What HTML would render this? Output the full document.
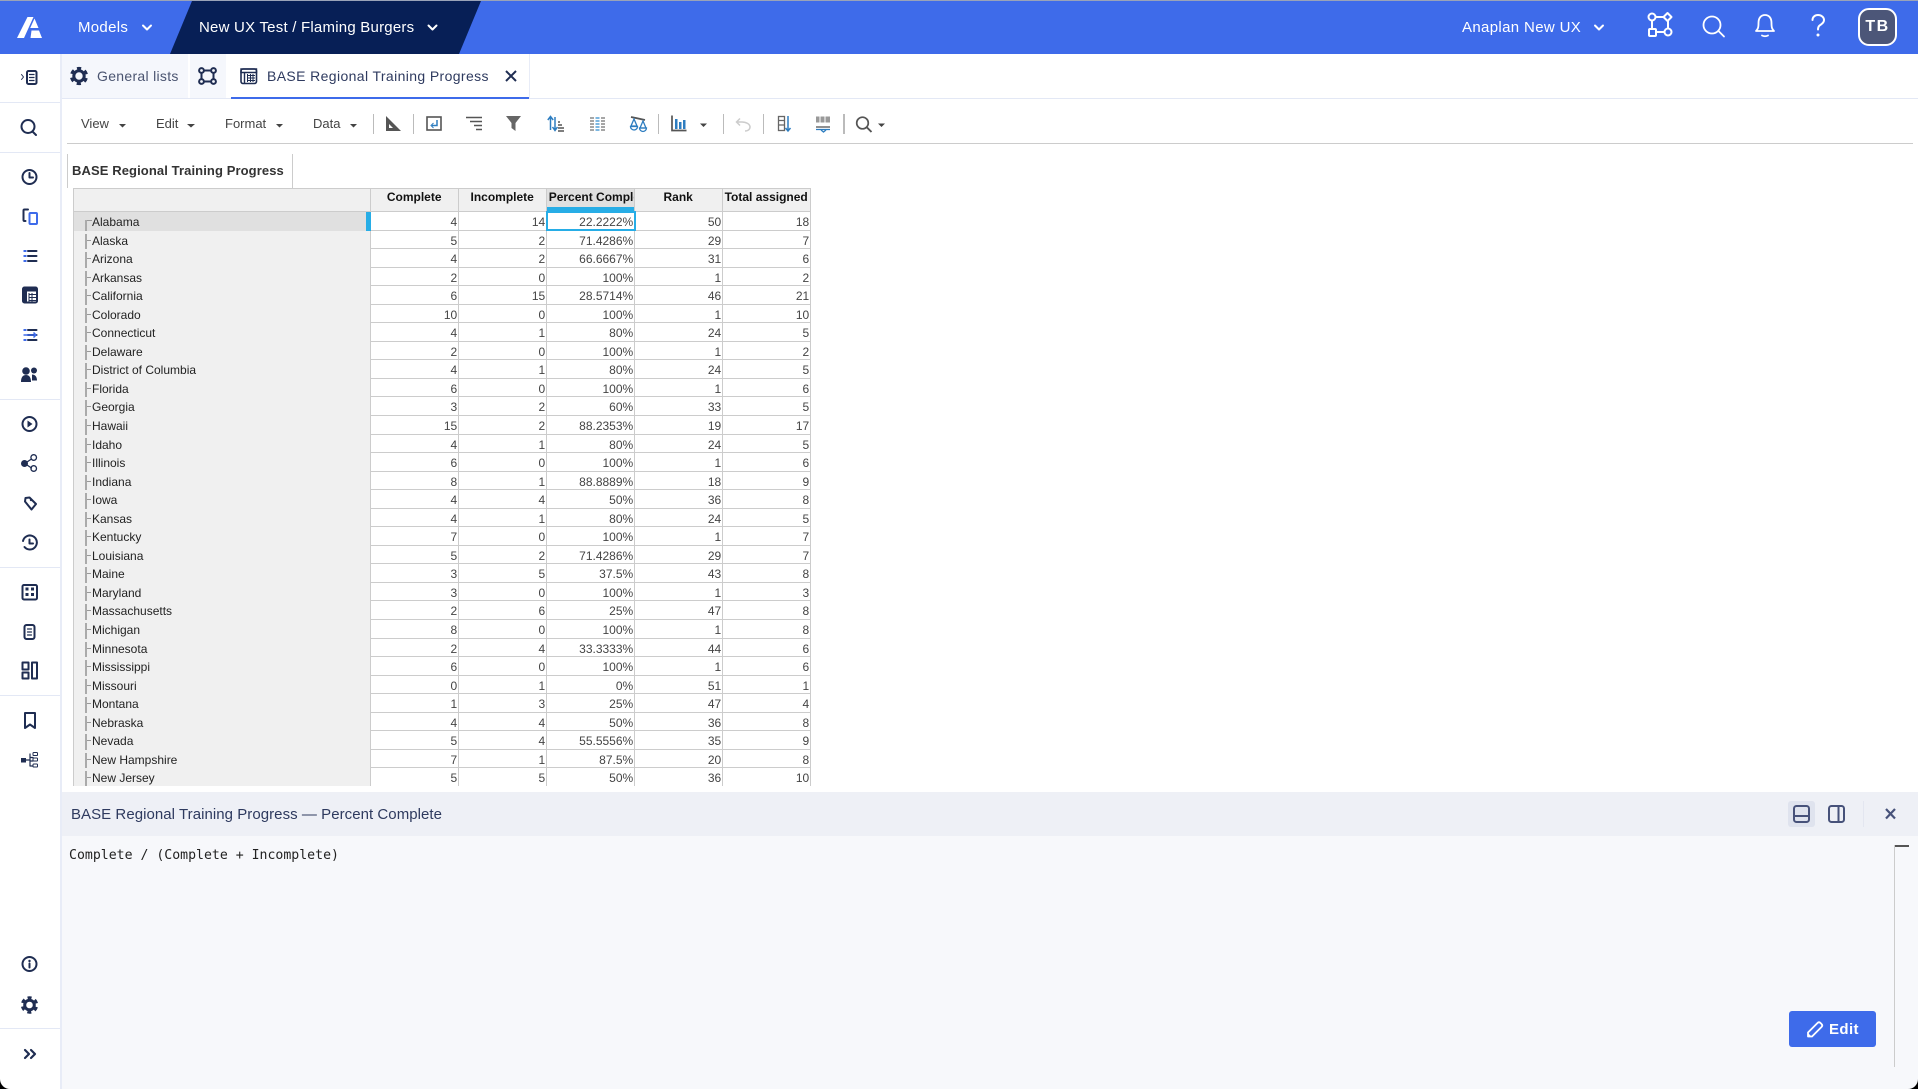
<!DOCTYPE html>
<html><head><meta charset="utf-8"><title>BASE Regional Training Progress</title>
<style>
*{box-sizing:border-box;margin:0;padding:0}
html,body{width:1918px;height:1089px;overflow:hidden;background:#fff;font-family:"Liberation Sans",Arial,sans-serif}
#root{position:relative;width:1918px;height:1089px;overflow:hidden;background:#fff}
.a{position:absolute}
.t{position:absolute;white-space:nowrap;line-height:20px}
.h{font-size:15px;letter-spacing:.3px;color:#fff}
.tb{font-size:13px;color:#444}
.grid{position:absolute;left:73px;top:188px;width:738px;height:598px;overflow:hidden;font-size:12px}
.hd{display:flex;height:24px}
.hd div{width:88px;flex:none;background:#f0f0f0;border-top:1px solid #ccc;border-right:1px solid #ccc;border-bottom:1px solid #ccc;font-weight:bold;color:#111;text-align:center;line-height:17px;white-space:nowrap;overflow:hidden}
.hd div:first-child{width:297.7px;border-left:1px solid #ccc}
.r{display:flex;height:18.55px;line-height:20px}
.r b{display:block;font-weight:normal;width:297.7px;flex:none;background:#f0f0f0;border-left:1px solid #ccc;border-right:1px solid #ccc;padding-left:18px;color:#222;position:relative;white-space:nowrap}
.r b:before{content:"";position:absolute;left:11px;top:3px;bottom:0;width:2px;background:#aaa}
.r b:after{content:"";position:absolute;left:13px;top:9px;width:4px;height:1px;background:#999}
.r i{display:block;font-style:normal;width:88px;flex:none;text-align:right;padding-right:.5px;border-right:1px solid #ccc;border-bottom:1px solid #ccc;color:#444;background:#fff}
.r.s b{background:#e0e0e0}
.r.s b:before{top:8px}
.r.s b:after{top:8px;width:5px}
</style></head><body><div id="root">

<!-- header -->
<div class="a" style="left:0;top:0;width:1918px;height:1px;background:#9aa3b8"></div>
<div class="a" style="left:0;top:1px;width:1918px;height:53px;background:#3e6bea"></div>
<div class="a" style="left:170px;top:1px;width:311px;height:53px;background:#071f56;clip-path:polygon(22px 0,311px 0,289px 100%,0 100%)"></div>
<span class="t h" style="left:78px;top:17px;top:18px">Models</span>
<span class="t h" style="left:199px;top:18px;letter-spacing:.22px">New UX Test / Flaming Burgers</span>
<span class="t h" style="left:1462px;top:18px;letter-spacing:.35px">Anaplan New UX</span>
<div class="a" style="left:1858px;top:8px;width:39px;height:38px;border:2px solid #fff;border-radius:11px;background:#4c5678"></div>
<span class="t" style="left:1858px;top:17px;width:39px;text-align:center;color:#fff;font-weight:bold;font-size:16px;letter-spacing:1.5px">TB</span>

<!-- rail -->
<div class="a" style="left:60px;top:54px;width:2px;height:1035px;background:#e8ecf7"></div>
<div class="a" style="left:0;top:102px;width:60px;height:1px;background:#e3e8f5"></div>
<div class="a" style="left:0;top:152px;width:60px;height:1px;background:#e3e8f5"></div>
<div class="a" style="left:0;top:399px;width:60px;height:1px;background:#e3e8f5"></div>
<div class="a" style="left:0;top:567px;width:60px;height:1px;background:#e3e8f5"></div>
<div class="a" style="left:0;top:695px;width:60px;height:1px;background:#e3e8f5"></div>
<div class="a" style="left:0;top:1028px;width:60px;height:1px;background:#e3e8f5"></div>

<!-- tabs -->
<div class="a" style="left:62px;top:54px;width:126px;height:44px;background:#f5f7fc"></div>
<div class="a" style="left:190px;top:54px;width:36px;height:44px;background:#f5f7fc"></div>
<div class="a" style="left:62px;top:98px;width:1856px;height:1px;background:#e3e8f5"></div>
<div class="a" style="left:231px;top:54px;width:298px;height:45px;background:#fff;border-bottom:2px solid #3e6bea"></div>
<div class="a" style="left:529px;top:54px;width:1px;height:44px;background:#e8ecf7"></div>
<span class="t" style="left:97px;top:66px;font-size:14px;letter-spacing:.3px;color:#4a5470">General lists</span>
<span class="t" style="left:267px;top:66px;font-size:14px;letter-spacing:.38px;color:#2e3a5f">BASE Regional Training Progress</span>

<!-- toolbar -->
<span class="t tb" style="left:81px;top:114px">View</span>
<span class="t tb" style="left:156px;top:114px">Edit</span>
<span class="t tb" style="left:225px;top:114px">Format</span>
<span class="t tb" style="left:313px;top:114px">Data</span>
<div class="a" style="left:67px;top:143px;width:1846px;height:1px;background:#ccc"></div>

<!-- view tab -->
<div class="a" style="left:67px;top:154px;width:226px;height:34px;border-left:1px solid #ccc;border-right:1px solid #ccc"></div>
<span class="t" style="left:72px;top:161px;font-size:13px;font-weight:bold;letter-spacing:.1px;color:#333">BASE Regional Training Progress</span>

<!-- grid -->
<div class="grid">
<div class="hd"><div></div><div>Complete</div><div>Incomplete</div><div style="background:#e0e0e0;text-align:left;padding-left:2px">Percent Complete</div><div>Rank</div><div>Total assigned</div></div>
<div class="r s"><b>Alabama</b><i>4</i><i>14</i><i>22.2222%</i><i>50</i><i>18</i></div>
<div class="r"><b>Alaska</b><i>5</i><i>2</i><i>71.4286%</i><i>29</i><i>7</i></div>
<div class="r"><b>Arizona</b><i>4</i><i>2</i><i>66.6667%</i><i>31</i><i>6</i></div>
<div class="r"><b>Arkansas</b><i>2</i><i>0</i><i>100%</i><i>1</i><i>2</i></div>
<div class="r"><b>California</b><i>6</i><i>15</i><i>28.5714%</i><i>46</i><i>21</i></div>
<div class="r"><b>Colorado</b><i>10</i><i>0</i><i>100%</i><i>1</i><i>10</i></div>
<div class="r"><b>Connecticut</b><i>4</i><i>1</i><i>80%</i><i>24</i><i>5</i></div>
<div class="r"><b>Delaware</b><i>2</i><i>0</i><i>100%</i><i>1</i><i>2</i></div>
<div class="r"><b>District of Columbia</b><i>4</i><i>1</i><i>80%</i><i>24</i><i>5</i></div>
<div class="r"><b>Florida</b><i>6</i><i>0</i><i>100%</i><i>1</i><i>6</i></div>
<div class="r"><b>Georgia</b><i>3</i><i>2</i><i>60%</i><i>33</i><i>5</i></div>
<div class="r"><b>Hawaii</b><i>15</i><i>2</i><i>88.2353%</i><i>19</i><i>17</i></div>
<div class="r"><b>Idaho</b><i>4</i><i>1</i><i>80%</i><i>24</i><i>5</i></div>
<div class="r"><b>Illinois</b><i>6</i><i>0</i><i>100%</i><i>1</i><i>6</i></div>
<div class="r"><b>Indiana</b><i>8</i><i>1</i><i>88.8889%</i><i>18</i><i>9</i></div>
<div class="r"><b>Iowa</b><i>4</i><i>4</i><i>50%</i><i>36</i><i>8</i></div>
<div class="r"><b>Kansas</b><i>4</i><i>1</i><i>80%</i><i>24</i><i>5</i></div>
<div class="r"><b>Kentucky</b><i>7</i><i>0</i><i>100%</i><i>1</i><i>7</i></div>
<div class="r"><b>Louisiana</b><i>5</i><i>2</i><i>71.4286%</i><i>29</i><i>7</i></div>
<div class="r"><b>Maine</b><i>3</i><i>5</i><i>37.5%</i><i>43</i><i>8</i></div>
<div class="r"><b>Maryland</b><i>3</i><i>0</i><i>100%</i><i>1</i><i>3</i></div>
<div class="r"><b>Massachusetts</b><i>2</i><i>6</i><i>25%</i><i>47</i><i>8</i></div>
<div class="r"><b>Michigan</b><i>8</i><i>0</i><i>100%</i><i>1</i><i>8</i></div>
<div class="r"><b>Minnesota</b><i>2</i><i>4</i><i>33.3333%</i><i>44</i><i>6</i></div>
<div class="r"><b>Mississippi</b><i>6</i><i>0</i><i>100%</i><i>1</i><i>6</i></div>
<div class="r"><b>Missouri</b><i>0</i><i>1</i><i>0%</i><i>51</i><i>1</i></div>
<div class="r"><b>Montana</b><i>1</i><i>3</i><i>25%</i><i>47</i><i>4</i></div>
<div class="r"><b>Nebraska</b><i>4</i><i>4</i><i>50%</i><i>36</i><i>8</i></div>
<div class="r"><b>Nevada</b><i>5</i><i>4</i><i>55.5556%</i><i>35</i><i>9</i></div>
<div class="r"><b>New Hampshire</b><i>7</i><i>1</i><i>87.5%</i><i>20</i><i>8</i></div>
<div class="r"><b>New Jersey</b><i>5</i><i>5</i><i>50%</i><i>36</i><i>10</i></div>
</div>
<!-- selection markers -->
<div class="a" style="left:366px;top:212px;width:5px;height:19px;background:#27ade6"></div>
<div class="a" style="left:547px;top:207px;width:87px;height:5px;background:#27ade6"></div>
<div class="a" style="left:546px;top:211px;width:90px;height:20px;border:2px solid #27ade6"></div>

<!-- formula panel -->
<div class="a" style="left:62px;top:792px;width:1856px;height:44px;background:#eef0f6"></div>
<div class="a" style="left:62px;top:836px;width:1856px;height:253px;background:#f7f8fb"></div>
<span class="t" style="left:71px;top:805px;font-size:15px;letter-spacing:.05px;color:#2e3a5f">BASE Regional Training Progress — Percent Complete</span>
<div class="a" style="left:1788px;top:801px;width:27px;height:26px;background:#dfe3ee;border-radius:3px"></div>
<div class="a" style="left:1863px;top:801px;width:1px;height:26px;background:#e3e6f0"></div>
<span class="t" style="left:69px;top:846px;font-family:'DejaVu Sans Mono','Liberation Mono',monospace;font-size:13.2px;color:#222">Complete / (Complete + Incomplete)</span>
<div class="a" style="left:1894px;top:845px;width:1px;height:222px;background:#ccc"></div>
<div class="a" style="left:1895px;top:845px;width:14px;height:2px;background:#555"></div>
<div class="a" style="left:1789px;top:1011px;width:87px;height:36px;background:#3e6bea;border-radius:3px"></div>
<span class="t" style="left:1829px;top:1020px;color:#fff;font-size:15px;letter-spacing:.4px;font-weight:bold">Edit</span>

<!-- bottom corners -->
<div class="a" style="left:0;top:1079px;width:10px;height:10px;background:#000"></div>
<div class="a" style="left:0;top:1079px;width:10px;height:10px;background:#fff;border-bottom-left-radius:10px"></div>
<div class="a" style="left:1908px;top:1079px;width:10px;height:10px;background:#000"></div>
<div class="a" style="left:1908px;top:1079px;width:10px;height:10px;background:#f7f8fb;border-bottom-right-radius:10px"></div>

<!-- icons -->
<svg class="a" style="left:0;top:0" width="1918" height="1089" viewBox="0 0 1918 1089" fill="none">
<!-- logo -->
<path d="M27.500 17h6L24 38h-7zM34.500 18.500l4 9.500h-8.300zM31.500 30.500h7.500l3 7.500H30.500z" fill="#fff"/>
<!-- header chevrons -->
<g stroke="#fff" stroke-width="2" stroke-linecap="round" stroke-linejoin="round">
<path d="M143 25.500l4 4 4-4"/><path d="M428.500 25.500l4 4 4-4"/><path d="M1595 25.500l4 4 4-4"/>
</g>
<!-- header right icons -->
<g stroke="#fff" stroke-width="2" stroke-linejoin="round" stroke-linecap="round">
<circle cx="1652" cy="17" r="3.500"/><path d="M1667.500 13l4 4-4 4-4-4z"/><rect x="1649" y="29" width="7" height="7" rx="1"/><circle cx="1668" cy="32" r="3.500"/>
<path d="M1656 17h7.500M1652 21v8M1668 21v7.500M1656 32h8.500"/>
<circle cx="1712" cy="25" r="8.500" stroke-width="1.800"/><path d="M1718.500 31l5.500 5.500" stroke-width="1.800"/>
<path d="M1756 31c2-2 2.500-3.500 2.500-8 0-5 2.500-8 6.500-8s6.500 3 6.500 8c0 4.500.5 6 2.500 8z" stroke-width="1.800"/><path d="M1762 35.500c2 1 4 1 6 0" stroke-width="1.800"/>
<path d="M1812.500 20c0-3 2.500-5 5.500-5s6 2 6 5-2.500 4-4 5.200c-1.500 1-2 2-2 4.300"/>
</g>
<circle cx="1818" cy="35" r="1.500" fill="#fff"/>

<!-- tab icons -->
<circle cx="79" cy="76" r="5.200" stroke="#1f2d52" stroke-width="3"/>
<circle cx="79" cy="76" r="7.800" stroke="#1f2d52" stroke-width="2.600" stroke-dasharray="4.200 3.970" transform="rotate(-105 79 76)"/>
<g stroke="#1f2d52" stroke-width="2" stroke-linejoin="round">
<circle cx="201.500" cy="70.500" r="2.400"/><circle cx="213.500" cy="70.500" r="2.400"/><circle cx="201.500" cy="81.500" r="2.400"/><circle cx="213.500" cy="81.500" r="2.400"/>
<path d="M204 70.500h7M204 81.500h7M201.500 73v6M213.500 73v6"/>
<rect x="241" y="69" width="15.500" height="14.500" rx="2" stroke-width="1.600"/>
</g>
<path d="M241 69h15.500v3.500H241zM244.500 72v11" stroke="#1f2d52" stroke-width="1.400"/>
<path d="M247 75.500h8M247 78h8M247 80.500h8M247.500 74v8M250.500 74v8M253 74v8" stroke="#1f2d52" stroke-width="1"/>
<path d="M506 71l10 10M516 71l-10 10" stroke="#1f2d52" stroke-width="2"/>

<!-- rail icons -->
<g stroke="#1f2d52" stroke-width="2" stroke-linecap="round" stroke-linejoin="round">
<path d="M21.500 74.500l2 2.500-2 2.500" stroke-width="1"/>
<rect x="27" y="71" width="9.500" height="13" rx="1.500"/><path d="M29.500 74.500h4.500M29.500 77.500h4.500M29.500 80.500h4.500" stroke-width="1.200"/>
<circle cx="28" cy="126.500" r="6.500"/><path d="M33 132l3 3"/>
<circle cx="29.500" cy="177" r="7"/><path d="M29.500 173v4.500h3.500"/>
<path d="M28 209.500h-3.500a1 1 0 0 0-1 1v9.500a1 1 0 0 0 1 1h1"/>
<rect x="29.500" y="213" width="7.500" height="11" rx="1" stroke="#3e6bea"/>
<path d="M28 251h8.500M28 256h8.500M28 261h8.500"/>
<path d="M28 330h8.500M28 340h8.500M28 335h8.500" />
<rect x="23" y="287.500" width="14" height="15" rx="1.500"/>
<circle cx="29.500" cy="424" r="7"/>
<circle cx="33.700" cy="457.500" r="2.800" stroke-width="1.300"/><circle cx="33.700" cy="468.500" r="2.800" stroke-width="1.300"/>
<path d="M27 462l4.500-3M27 465l4.500 3" stroke-width="1.300"/>
<path d="M25 501.500l.5-3.500 4-.5 6.500 6.500-4.500 5.500z"/>
<path d="M23 541a7 7 0 1 1 1.500 6"/><path d="M29.500 539.500v4h3.500"/>
<rect x="22.500" y="585" width="14.500" height="14.500" rx="1.500"/>
<g transform="translate(0 1)"><rect x="24.500" y="624" width="10" height="14" rx="2"/><path d="M27.500 628h4M27.500 631h4M27.500 634h4" stroke-width="1.200"/></g>
<g transform="translate(0 1)"><rect x="22.500" y="661.500" width="6" height="7"/><rect x="22.500" y="671.500" width="6" height="6"/><rect x="32" y="661.500" width="5" height="16"/></g>
<g transform="translate(0 2)"><path d="M25 711h10v15l-5-3.500-5 3.500z"/></g>
<g transform="translate(0 3)"><path d="M33 754.500h-3M33 758h-3M33 763h-3M30 751v12" stroke-width="1.200"/><path d="M26 757h4" stroke-width="1.200"/>
<rect x="33" y="749.500" width="4.500" height="3" rx=".8" stroke-width="1"/><rect x="33" y="755" width="4.500" height="3" rx=".8" stroke-width="1"/><rect x="33" y="761" width="4.500" height="3" rx=".8" stroke-width="1"/></g>
<g transform="translate(0 4)"><circle cx="29.500" cy="960" r="7"/><path d="M29.500 959.500v4"/></g>
<path d="M25 1049l4 4-4 4M31 1049l4 4-4 4" stroke-width="2.200" transform="translate(0 1)"/>
</g>
<circle cx="29.500" cy="1005" r="4.800" stroke="#1f2d52" stroke-width="3"/>
<circle cx="29.500" cy="1005" r="7.400" stroke="#1f2d52" stroke-width="2.600" stroke-dasharray="4 3.750" transform="rotate(-105 29.500 1005)"/>
<path d="M23.500 250h3v2h-3zM23.500 255h3v2h-3zM23.500 260h3v2h-3zM23.500 339h3v2h-3zM23.500 329h3v2h-3z" fill="#3e6bea"/>
<path d="M23.500 335h12M33.500 332.500l2.500 2.500-2.500 2.500" stroke="#3e6bea" stroke-width="1.500"/>
<path d="M23 288h14v3.500h-14zM23 288h4v14h-4z" fill="#1f2d52"/>
<path d="M29 294.500h7M29 297.500h7M29 300.500h7M29 293v9M32 293v9" stroke="#1f2d52" stroke-width="1"/>
<path d="M27.500 420.500l5 3.500-5 3.500z" fill="#1f2d52"/>
<circle cx="24.500" cy="463.500" r="3.500" fill="#1f2d52"/>
<path d="M25.500 587.500h3v3h-3zM31 587.500h3v3h-3zM25.500 593h3v3h-3zM31 593h3v3h-3z" fill="#1f2d52"/>
<circle cx="29.500" cy="961" r="1.200" fill="#1f2d52"/>
<path d="M21 758h5v4.500h-5z" fill="#1f2d52"/>
<circle cx="26" cy="371" r="3.800" fill="#1f2d52"/><circle cx="34" cy="370.500" r="3" fill="#1f2d52"/>
<path d="M21 382c0-5 2-7 5-7s5 2 5 7zM32 374.500c3 0 5 2 5 6h-5z" fill="#1f2d52"/>
<circle cx="31" cy="500" r="1.200" fill="#1f2d52"/>

<!-- toolbar carets -->
<path d="M119 124h7l-3.500 3.500zM187 124h8l-4 3.500zM276 124h7l-3.500 3.500zM350 124h7l-3.500 3.500zM700 123.500h7l-3.500 3.500zM878 123.500h7l-3.500 3.500z" fill="#444"/>
<!-- separators -->
<path d="M373.500 114v20M413.500 114v20M658.500 114v20M723.500 114v20M763.500 114v20" stroke="#bbb"/>
<path d="M844 114v20" stroke="#bbb" stroke-width="2"/>
<!-- toolbar icons -->
<path d="M386 116l15 15h-15zM389 124v4h4z" fill="#555" fill-rule="evenodd"/>
<rect x="427" y="117" width="14" height="13" stroke="#555" stroke-width="1.600"/><path d="M437 120v5.500h-5" stroke="#2d7dc0" stroke-width="1.500"/><path d="M433.500 123l-2.500 2.500 2.500 2.500" stroke="#2d7dc0" stroke-width="1"/>
<path d="M466 117.500h16M470 121.500h12M474 125.500h8M476 129.500h6" stroke="#555" stroke-width="1.600"/>
<path d="M506 116h15l-5.500 7v8l-4-3v-5z" fill="#666"/>
<path d="M550.500 117v13M547.800 120l2.700-3.500 2.700 3.500M555 117v13M552.500 127l2.500 3.500 2.500-3.500" stroke="#2d7dc0" stroke-width="1.500"/>
<path d="M558 122h2M558 125h4M558 128h6M558 131h6" stroke="#555" stroke-width="1.600"/>
<path d="M590 118h4M590 121h4M590 124h4M590 127h4M590 130h4M601 118h4M601 121h4M601 124h4M601 127h4M601 130h4" stroke="#999" stroke-width="1.800"/>
<path d="M595.500 118h4M595.500 121h4M595.500 124h4M595.500 127h4M595.500 130h4" stroke="#6aaddd" stroke-width="1.800"/>
<path d="M631 117l14 3" stroke="#555" stroke-width="1.800"/>
<path d="M634 119l-3 7h6zM643 121l-3 7h6z" stroke="#2d7dc0" stroke-width="1.300"/>
<path d="M630.500 126.500a3.500 3.500 0 0 0 7 0zM639.500 128a3.500 3.500 0 0 0 7 0z" stroke="#2d7dc0" stroke-width="1.300"/>
<path d="M672 115.500v15h14.500" stroke="#555" stroke-width="1.700"/>
<path d="M675 119h2.500v10H675zM679 122h2.500v7H679zM683 120h2.500v9H683z" fill="#2d7dc0"/>
<path d="M737 122l5 0c4 0 8 2 8 5s-3 4-5 4M740 118.500l-3.500 3.500 3.500 3.500" stroke="#ccc" stroke-width="1.500"/>
<rect x="778.500" y="116.500" width="6" height="14" stroke="#666" stroke-width="1.300"/><path d="M779 120.500h5M779 125h5" stroke="#666" stroke-width="1.300"/>
<path d="M788 116v15M785.500 128l2.500 3 2.500-3" stroke="#2d7dc0" stroke-width="1.500"/>
<path d="M816 116.500h14v6h-14z" fill="#999"/><path d="M820 116v7M825 116v7" stroke="#fff"/><path d="M816 127h14" stroke="#555" stroke-width="1.300"/><path d="M816 129.500h14M821 130l2.500 2 2.500-2" stroke="#2d7dc0" stroke-width="1.300"/>
<circle cx="862.500" cy="123" r="5.800" stroke="#555" stroke-width="1.700"/><path d="M867 127.500l4.500 4.500" stroke="#555" stroke-width="1.900"/>

<!-- panel icons -->
<g stroke="#47527a" stroke-width="2">
<rect x="1794" y="806" width="15" height="16" rx="2.500"/><path d="M1794 816h15"/>
<rect x="1829" y="806" width="15" height="16" rx="2.500"/><path d="M1838.500 806v16"/>
<path d="M1886 809l9 9.500M1895 809l-9 9.500" stroke-width="2.200"/>
</g>
<!-- edit pencil -->
<path d="M1808 1032.500l0 4h4l9.500-9.500c1-1 1-2 0-3l-1-1c-1-1-2-1-3 0z" stroke="#fff" stroke-width="1.800" stroke-linejoin="round"/>
<path d="M1808 1033l4 4h-4z" fill="#fff"/>
</svg>
</div></body></html>
